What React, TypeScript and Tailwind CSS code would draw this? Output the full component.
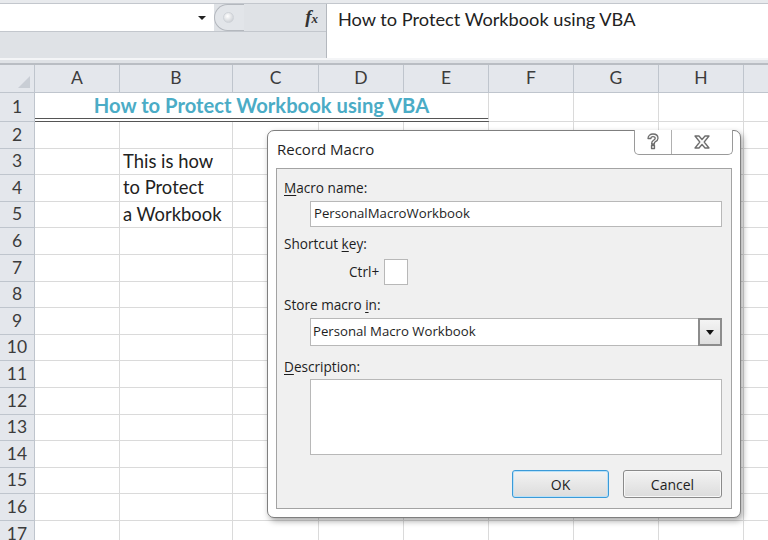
import React from "react";

const cols = [35, 85, 113, 86, 85, 85, 85, 85, 85, 40];
const colNames = ["", "A", "B", "C", "D", "E", "F", "G", "H", ""];
const cellFont = { fontFamily: "Lato, 'Open Sans', sans-serif" };

function CloseGlyph() {
  return (
    <svg width="18" height="14" viewBox="0 0 18 14">
      <path
        d="M2 1 H6 L9 4.5 L12 1 H16 L11.2 7 L16 13 H12 L9 9.5 L6 13 H2 L6.8 7 Z"
        fill="#fafafa"
        stroke="#6d6d6d"
        strokeWidth="1.3"
        strokeLinejoin="round"
      />
    </svg>
  );
}

function HelpGlyph() {
  return (
    <svg width="14" height="18" viewBox="0 0 14 18">
      <path
        d="M2 5.5 C2 2.5 4.2 1 7 1 C10 1 12 2.8 12 5.2 C12 7.4 10.4 8.2 9 9 C8.3 9.4 8.4 10 8.4 11 H5.6 C5.6 9.3 5.8 8.4 7.2 7.5 C8.6 6.7 9.2 6.2 9.2 5.2 C9.2 4.2 8.3 3.6 7 3.6 C5.7 3.6 4.9 4.3 4.9 5.5 Z M5.5 12.5 H8.5 V15.5 H5.5 Z"
        fill="#fafafa"
        stroke="#6d6d6d"
        strokeWidth="1.3"
        strokeLinejoin="round"
      />
    </svg>
  );
}

function Grid() {
  const rows = Array.from({ length: 17 }, (_, i) => i + 1);
  const bText: Record<number, string> = { 3: "This is how", 4: "to Protect", 5: "a Workbook" };
  return (
    <div className="flex flex-col" style={cellFont}>
      <div className="flex h-[28px]">
        {cols.map((w, i) => (
          <div
            key={i}
            style={{ width: w }}
            className={`shrink-0 h-full bg-[#e4e7ec] border-b border-r border-[#bfc5cd] flex items-center justify-center text-[17.5px] text-[#3c3c3c] ${i === 0 ? "relative" : ""}`}
          >
            {i === 0 ? (
              <div className="absolute right-[4px] bottom-[4px] w-0 h-0 border-l-[12px] border-l-transparent border-b-[12px] border-b-[#c9ced5]" />
            ) : (
              colNames[i]
            )}
          </div>
        ))}
      </div>
      {rows.map((r) => (
        <div key={r} className={`flex shrink-0 ${r === 1 ? "h-[29px]" : "h-[26.6px]"}`}>
          <div
            style={{ width: cols[0] }}
            className="shrink-0 h-full bg-[#e4e7ec] border-b border-r border-[#bfc5cd] flex items-center justify-center text-[17.5px] text-[#3c3c3c]"
          >
            {r}
          </div>
          {r === 1 ? (
            <>
              <div
                style={{ width: 85 + 113 + 86 + 85 + 85 }}
                className="shrink-0 h-full border-b-[4px] border-double border-[#555] border-r border-r-[#dadada] flex items-center justify-center text-[20.2px] font-bold text-[#4bacc6]"
              >
                How to Protect Workbook using VBA
              </div>
              {cols.slice(6).map((w, i) => (
                <div key={i} style={{ width: w }} className="shrink-0 h-full border-b border-r border-[#dadada]" />
              ))}
            </>
          ) : (
            cols.slice(1).map((w, i) => (
              <div
                key={i}
                style={{ width: w }}
                className="shrink-0 h-full border-b border-r border-[#dadada] flex items-center pl-[3px] text-[18.4px] text-[#222] whitespace-nowrap"
              >
                {i === 1 && bText[r] ? bText[r] : ""}
              </div>
            ))
          )}
        </div>
      ))}
    </div>
  );
}

function FormulaBar() {
  return (
    <div className="flex flex-col">
      <div className="h-[4px] bg-[#e8eaed] border-b border-[#c3c7cd]" />
      <div className="flex h-[54px]">
        <div className="w-[326px] shrink-0 flex flex-col">
          <div className="h-[28px] flex border-b border-[#c3c7cd] bg-[#dfe2e6]">
            <div className="w-[214px] h-full bg-white flex items-center justify-end pr-[8px]">
              <div className="w-0 h-0 border-l-[4px] border-r-[4px] border-t-[4px] border-l-transparent border-r-transparent border-t-[#222]" />
            </div>
            <div className="w-[30px] h-full rounded-l-full border-l border-t border-b border-[#b4b8be] bg-[#e2e5e9] flex items-center pl-[8px]">
              <div className="w-[11px] h-[11px] rounded-full bg-[radial-gradient(circle_at_40%_35%,#ffffff,#c2c6cc)] border border-[#cfd3d8]" />
            </div>
            <div className="flex-1 flex items-center justify-end pr-[8px]">
              <span className="italic font-bold text-[19px] text-[#333]" style={{ fontFamily: "'Liberation Serif', serif" }}>
                f<span className="text-[13px]">x</span>
              </span>
            </div>
          </div>
          <div className="flex-1 bg-[#dfe2e6]" />
        </div>
        <div className="flex-1 bg-white border-l border-[#b4b8be] pl-[11px] pt-[2px] text-[18.2px] text-[#222]" style={cellFont}>
          How to Protect Workbook using VBA
        </div>
      </div>
      <div className="h-[7px] bg-[#dfe2e6] border-t-2 border-t-[#f4f5f7] border-b-2 border-b-[#b9bdc3]" />
    </div>
  );
}

function Dialog() {
  const dlgFont = { fontFamily: "'Open Sans', 'Noto Sans', sans-serif" };
  return (
    <div
      className="absolute left-[267px] top-[130px] w-[474px] h-[388px] rounded-[7px] bg-white border border-[#7f7f7f] shadow-[2px_3px_6px_rgba(0,0,0,0.35)] flex flex-col px-[8px] pb-[8px] text-[#1e1e1e]"
      style={dlgFont}
    >
      <div className="absolute left-[366px] top-[-1px] w-[99px] h-[25px] flex border border-t-0 border-[#9a9a9a] rounded-b-[5px] bg-white">
        <div className="w-[37px] h-full border-r border-[#b0b0b0] flex items-center justify-center">
          <HelpGlyph />
        </div>
        <div className="flex-1 flex items-center justify-center">
          <CloseGlyph />
        </div>
      </div>
      <div className="h-[37px] flex items-center pl-[1px] text-[15px]">Record Macro</div>
      <div className="flex-1 bg-[#f0f0f0] border border-[#a3a3a3] flex flex-col pt-[9px] text-[13.6px]">
        <div className="h-[20px] leading-[20px] ml-[7px]">
          <u className="underline-offset-2">M</u>acro name:
        </div>
        <div className="mt-[3px] ml-[33px] mr-[9px] h-[26px] bg-white border border-[#b8b8b8] flex items-center pl-[3px] text-[13.2px]">
          PersonalMacroWorkbook
        </div>
        <div className="mt-[7px] h-[20px] leading-[20px] ml-[7px]">
          Shortcut <u className="underline-offset-2">k</u>ey:
        </div>
        <div className="mt-[5px] h-[26px] flex items-center ml-[72px]">
          <span className="mr-[5px]">Ctrl+</span>
          <div className="w-[24px] h-[26px] bg-white border border-[#b8b8b8]" />
        </div>
        <div className="mt-[10px] h-[20px] leading-[20px] ml-[7px]">
          Store macro <u className="underline-offset-2">i</u>n:
        </div>
        <div className="mt-[3px] ml-[33px] mr-[9px] h-[28px] bg-white border border-[#b8b8b8] flex items-center text-[13.2px]">
          <span className="flex-1 pl-[2px]">Personal Macro Workbook</span>
          <div className="w-[24px] h-[28px] -mr-px border-2 border-[#8c8c8c] bg-gradient-to-b from-[#f4f4f4] to-[#dedede] flex items-center justify-center">
            <div className="w-0 h-0 border-l-[4px] border-r-[4px] border-t-[5px] border-l-transparent border-r-transparent border-t-[#111]" />
          </div>
        </div>
        <div className="mt-[11px] h-[20px] leading-[20px] ml-[7px]">
          <u className="underline-offset-2">D</u>escription:
        </div>
        <div className="mt-[2px] ml-[33px] mr-[9px] h-[76px] bg-white border border-[#b8b8b8]" />
        <div className="mt-[15px] flex justify-end gap-[14px] mr-[9px]">
          <div className="w-[97px] h-[28px] rounded-[3px] border border-[#3a9ad8] shadow-[inset_0_0_0_1px_#b9e0f7] bg-gradient-to-b from-[#f3f3f3] to-[#dcdcdc] flex items-center justify-center text-[14px]">
            OK
          </div>
          <div className="w-[99px] h-[28px] rounded-[3px] border border-[#8a8a8a] shadow-[inset_0_0_0_1px_#f8f8f8] bg-gradient-to-b from-[#f3f3f3] to-[#dcdcdc] flex items-center justify-center text-[14px]">
            Cancel
          </div>
        </div>
      </div>
    </div>
  );
}

export default function App() {
  return (
    <div className="relative w-[768px] h-[540px] overflow-hidden bg-white">
      <FormulaBar />
      <Grid />
      <Dialog />
    </div>
  );
}
